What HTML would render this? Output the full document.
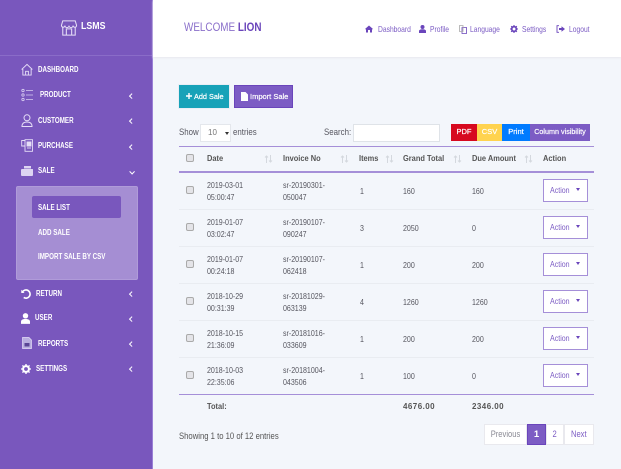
<!DOCTYPE html>
<html><head><meta charset="utf-8"><style>
html,body{margin:0;padding:0}
body{width:621px;height:469px;overflow:hidden;background:#f3f6fb;position:relative;font-family:"Liberation Sans",sans-serif;font-size:8.500px;color:#56565f}
.a{position:absolute;white-space:nowrap}
.t{position:absolute;white-space:nowrap;line-height:12px;transform:translateY(-6px) scaleX(.83);transform-origin:0 50%}
#side{position:absolute;left:0;top:0;width:152px;height:469px;background:#7957bd;border-right:1px solid #9a80d6}
.m{position:absolute;left:38px;color:#fff;font-weight:bold;font-size:7.800px;line-height:12px;transform:translateY(-6px) scaleX(.8);transform-origin:0 50%;white-space:nowrap}
.ch{position:absolute;left:130px;width:2.500px;height:2.500px;border-left:1.4px solid #fff;border-bottom:1.4px solid #fff;transform:rotate(45deg)}
svg{position:absolute;overflow:visible}
.cb{position:absolute;left:186px;width:6px;height:6px;background:#e4e4e8;border:1px solid #aaa;border-radius:2px}
.act{position:absolute;left:543px;width:43px;height:21px;background:#fff;border:1px solid #a58fd8;color:#7c5cc4;font-size:8.500px;line-height:21px;margin-top:-.5px}
.act span{position:absolute;left:6px;transform:scaleX(.83);transform-origin:0 50%}
.act i{position:absolute;left:32px;top:8.500px;border-left:2.500px solid transparent;border-right:2.500px solid transparent;border-top:3px solid #6a45bb}
.sort{position:absolute;top:155px;width:7px;height:8px}
.b{font-weight:bold;color:#555;font-size:8px;transform:translateY(-6px) scaleX(.93)}
.n{font-weight:bold;color:#555;font-size:8px;transform:translateY(-6px);letter-spacing:.45px}
.hl{position:absolute;left:179px;width:415px;background:#a58fd8}
.sep{position:absolute;left:179px;width:415px;height:1px;background:#e9ecf1}
.dt{position:absolute;color:#fff;text-align:center;line-height:16px;height:17px;top:124px;font-size:7.500px;-webkit-text-stroke:.2px #fff;white-space:nowrap}
.nav{position:absolute;color:#7c5cc4;font-size:8.500px;line-height:12px;top:23px;white-space:nowrap;transform:scaleX(.79);transform-origin:0 50%}
.pg{position:absolute;top:424px;height:21px;line-height:21px;text-align:center;background:#fff;font-size:9.500px;color:#7c5cc4;box-shadow:0 0 0 1px #e9e9ee inset}
.pg span{display:inline-block;transform:scaleX(.8)}
</style></head><body>

<div id="side">
<div style="position:absolute;left:0;top:55px;width:152px;height:1px;background:#8a6cc8"></div>
<svg style="left:61px;top:20px" width="16" height="16" viewBox="0 0 18 18" fill="none" stroke="#e6def7" stroke-width="1.2"><path d="M2 1h14l1.500 5a2 2 0 0 1-4 .3 2 2 0 0 1-4.500 0 2 2 0 0 1-4.500 0 2 2 0 0 1-4-.3z"/><path d="M2 8v9h14V8"/><path d="M6 17v-7h6v7"/></svg>
<div class="a" style="left:81px;top:19.500px;color:#fff;font-weight:bold;font-size:10px;line-height:14px;transform:scaleX(.88);transform-origin:0 50%">LSMS</div>

<svg style="left:21px;top:63px" width="12" height="13" viewBox="0 0 13 13" fill="none" stroke="#e6def7"><path d="M.7 6.500 6.500 1l5.800 5.500M2 6v6.500h9V6M5 12.500V8.500h3v4"/></svg>
<div class="m" style="top:69.500px">DASHBOARD</div>

<svg style="left:21px;top:89px" width="12" height="12" viewBox="0 0 12 12" fill="none" stroke="#d8cdf0" stroke-width=".8"><circle cx="2" cy="1.500" r="1.200"/><circle cx="2" cy="6" r="1.200"/><circle cx="2" cy="10.500" r="1.200"/><path d="M5 1.500h7M5 6h7M5 10.500h7"/></svg>
<div class="m" style="top:95px;left:39.500px">PRODUCT</div><div class="ch" style="top:93.500px"></div>

<svg style="left:21px;top:114px" width="12" height="13" viewBox="0 0 12 13" fill="none" stroke="#e6def7"><circle cx="6" cy="3.800" r="3"/><path d="M1 12.500c0-3 2-4.500 5-4.500s5 1.500 5 4.500z"/></svg>
<div class="m" style="top:120.500px">CUSTOMER</div><div class="ch" style="top:119px"></div>

<svg style="left:21px;top:139px" width="12" height="13" viewBox="0 0 12 13" fill="none" stroke="#e6def7" stroke-width=".9"><path d="M4 .7h7.500v11.600H4zM.7 1.500H4v5.500H.7z"/><path d="M6 3h4v4H6z" fill="#e6def7"/><path d="M6 9h4"/></svg>
<div class="m" style="top:146px">PURCHASE</div><div class="ch" style="top:144.500px"></div>

<svg style="left:21px;top:166px" width="12" height="10" viewBox="0 0 12 10" fill="#ddd4f2"><path d="M3 0h7v2.500H3zM1 3h10.500a.5.500 0 0 1 .5.500V9a1 1 0 0 1-1 1H1a1 1 0 0 1-1-1V4a1 1 0 0 1 1-1z"/></svg>
<div class="m" style="top:171px">SALE</div>
<div class="ch" style="top:169.500px;transform:rotate(-45deg)"></div>

<div style="position:absolute;left:16px;top:186px;width:120px;height:92px;background:#a58ed3;border:1px solid #b09bd9;border-radius:2px"></div>
<div style="position:absolute;left:32px;top:196px;width:89px;height:22px;background:#7957bd;border-radius:2px"></div>
<div class="m" style="top:207.500px">SALE LIST</div>
<div class="m" style="top:232.500px">ADD SALE</div>
<div class="m" style="top:257px">IMPORT SALE BY CSV</div>

<svg style="left:21px;top:289px" width="10" height="10" viewBox="0 0 11 11" fill="none" stroke="#fff" stroke-width="1.800"><path d="M1.500 3.500A4.500 4.500 0 1 1 3 9.300"/><path d="M.3 .8v3.600h3.600" fill="#fff" stroke="none"/></svg>
<div class="m" style="top:293.500px;left:36px">RETURN</div><div class="ch" style="top:291.500px"></div>

<svg style="left:21px;top:312.500px" width="9" height="11" viewBox="0 0 10 12" fill="#fff"><circle cx="5" cy="3" r="3"/><path d="M0 12V9.500C0 7.500 2 6.500 5 6.500s5 1 5 3V12z"/></svg>
<div class="m" style="top:318px;left:34.500px">USER</div><div class="ch" style="top:316.500px"></div>

<svg style="left:22px;top:337px" width="10" height="12" viewBox="0 0 10 12"><path d="M.5.500H7L9.500 3v8.500H.5z" fill="#b9aee0" stroke="#e6def7" stroke-width=".7"/><path d="M2.500 6h5v3.500h-5z" fill="#5b4596"/></svg>
<div class="m" style="top:343.500px">REPORTS</div><div class="ch" style="top:342px"></div>

<svg style="left:21px;top:364px" width="10" height="10" viewBox="0 0 11 11"><circle cx="5.500" cy="5.500" r="3.200" fill="none" stroke="#fff" stroke-width="2.200"/><path d="M5.500 0v11M0 5.500h11M1.600 1.600l7.800 7.800M9.400 1.600l-7.800 7.800" stroke="#fff" stroke-width="1.500" stroke-dasharray="2 7 2 0"/></svg>
<div class="m" style="top:368.500px;left:36px">SETTINGS</div><div class="ch" style="top:367px"></div>
</div>

<div style="position:absolute;left:153px;top:0;width:468px;height:57px;background:#fff;box-shadow:0 1px 2px #e8e8ee"></div>
<div class="a" style="left:184px;top:21px;font-size:11.500px;line-height:14px;color:#8a6fca;transform:scaleX(.86);transform-origin:0 50%">WELCOME <b style="color:#6a45bb">LION</b></div>

<svg style="left:365px;top:25px" width="8" height="8" viewBox="0 0 8 8" fill="#6a45bb"><path d="M0 4 4 .5 8 4 7 4.500V7.500H5V5H3V7.500H1V4.500z"/></svg>
<div class="nav" style="left:378px">Dashboard</div>
<svg style="left:419px;top:25px" width="7" height="8" viewBox="0 0 7 8" fill="#6a45bb"><circle cx="3.500" cy="2" r="2"/><path d="M0 8V6C0 5 1.500 4.300 3.500 4.300S7 5 7 6v2z"/></svg>
<div class="nav" style="left:430px">Profile</div>
<svg style="left:459px;top:25px" width="8" height="9" viewBox="0 0 8 9" fill="none" stroke="#6a45bb" stroke-width=".8"><path d="M3 2.500h4.500v6H3z"/><path d="M.5.500h3.500v6H.5z" stroke="#aaa"/></svg>
<div class="nav" style="left:470px">Language</div>
<svg style="left:510px;top:25px" width="8" height="8" viewBox="0 0 11 11"><circle cx="5.500" cy="5.500" r="3.200" fill="none" stroke="#6a45bb" stroke-width="2.400"/><path d="M5.500 0v11M0 5.500h11M1.600 1.600l7.800 7.800M9.400 1.600l-7.800 7.800" stroke="#6a45bb" stroke-width="1.500" stroke-dasharray="2 7 2 0"/></svg>
<div class="nav" style="left:522px">Settings</div>
<svg style="left:556px;top:25px" width="9" height="8" viewBox="0 0 9 8"><path d="M3 .7H1v6.600h2" fill="none" stroke="#6a45bb" stroke-width=".9"/><path d="M3 3h2.500V1.300L9 4 5.500 6.700V5H3z" fill="#6a45bb"/></svg>
<div class="nav" style="left:569px">Logout</div>

<div class="a" style="left:179px;top:85px;width:50px;height:23px;background:#17a2b8;box-shadow:0 0 0 1px #e9eef5"></div>
<svg style="left:186px;top:93px" width="6" height="6" viewBox="0 0 6 6"><path d="M3 0v6M0 3h6" stroke="#fff" stroke-width="1.400"/></svg>
<div class="a" style="left:194px;top:91px;color:#fff;font-size:7.300px;line-height:12px;-webkit-text-stroke:.2px #fff">Add Sale</div>
<div class="a" style="left:234px;top:85px;width:59px;height:23px;background:#7c5cc4;border:1px solid #6a45bb;box-sizing:border-box"></div>
<svg style="left:241px;top:92px" width="7" height="9" viewBox="0 0 7 9" fill="#fff"><path d="M0 0h4.500L7 2.500V9H0z"/></svg>
<div class="a" style="left:250px;top:91px;color:#fff;font-size:7.500px;line-height:12px;-webkit-text-stroke:.2px #fff">Import Sale</div>

<div class="t" style="left:179px;top:133px;font-size:9.500px">Show</div>
<div class="a" style="left:200px;top:124px;width:31px;height:18px;background:#fff;border:1px solid #e4e7ec;box-sizing:border-box;color:#777;font-size:8px;line-height:16px;padding-left:7px">10<span style="position:absolute;left:24px;top:7px;border-left:2px solid transparent;border-right:2px solid transparent;border-top:3px solid #333"></span></div>
<div class="t" style="left:233px;top:133px;font-size:9.500px">entries</div>
<div class="t" style="left:324px;top:133px;font-size:9.500px">Search:</div>
<div class="a" style="left:353px;top:124px;width:87px;height:18px;background:#fff;border:1px solid #dfe3e8;box-sizing:border-box"></div>

<div class="dt" style="left:451px;width:26px;background:#d7091f">PDF</div>
<div class="dt" style="left:477px;width:25px;background:#ffd34f">CSV</div>
<div class="dt" style="left:502px;width:28px;background:#007bff">Print</div>
<div class="dt" style="left:530px;width:60px;background:#7c5cc4;font-size:7.200px">Column visibility</div>

<div class="hl" style="top:146px;height:1px"></div>
<div class="hl" style="top:171px;height:2px"></div>
<div class="hl" style="top:394px;height:1px"></div>
<div class="sep" style="top:208.500px"></div>
<div class="sep" style="top:245.500px"></div>
<div class="sep" style="top:282.500px"></div>
<div class="sep" style="top:319.500px"></div>
<div class="sep" style="top:356.500px"></div>

<div class="cb" style="top:154px"></div>
<div class="t b" style="left:207px;top:159px">Date</div><svg class="sort" style="left:265px" viewBox="0 0 7 8" fill="none" stroke="#d4d8de"><path d="M1.500 8V1M0 2.500 1.500 1 3 2.500M5.500 0v7M4 5.500 5.500 7 7 5.500"/></svg>
<div class="t b" style="left:283px;top:159px">Invoice No</div><svg class="sort" style="left:341px" viewBox="0 0 7 8" fill="none" stroke="#d4d8de"><path d="M1.500 8V1M0 2.500 1.500 1 3 2.500M5.500 0v7M4 5.500 5.500 7 7 5.500"/></svg>
<div class="t b" style="left:359px;top:159px">Items</div><svg class="sort" style="left:386px" viewBox="0 0 7 8" fill="none" stroke="#d4d8de"><path d="M1.500 8V1M0 2.500 1.500 1 3 2.500M5.500 0v7M4 5.500 5.500 7 7 5.500"/></svg>
<div class="t b" style="left:403px;top:159px">Grand Total</div><svg class="sort" style="left:454px" viewBox="0 0 7 8" fill="none" stroke="#d4d8de"><path d="M1.500 8V1M0 2.500 1.500 1 3 2.500M5.500 0v7M4 5.500 5.500 7 7 5.500"/></svg>
<div class="t b" style="left:472px;top:159px">Due Amount</div><svg class="sort" style="left:525px" viewBox="0 0 7 8" fill="none" stroke="#d4d8de"><path d="M1.500 8V1M0 2.500 1.500 1 3 2.500M5.500 0v7M4 5.500 5.500 7 7 5.500"/></svg>
<div class="t b" style="left:543px;top:159px">Action</div>

<!-- row 1 -->
<div class="cb" style="top:186px"></div>
<div class="t" style="left:207px;top:185px">2019-03-01</div><div class="t" style="left:207px;top:197px">05:00:47</div>
<div class="t" style="left:283px;top:185px">sr-20190301-</div><div class="t" style="left:283px;top:197px">050047</div>
<div class="t" style="left:360px;top:190.500px">1</div><div class="t" style="left:403px;top:190.500px">160</div><div class="t" style="left:472px;top:190.500px">160</div>
<div class="act" style="top:179px"><span>Action</span><i></i></div>
<!-- row 2 -->
<div class="cb" style="top:223px"></div>
<div class="t" style="left:207px;top:222px">2019-01-07</div><div class="t" style="left:207px;top:234px">03:02:47</div>
<div class="t" style="left:283px;top:222px">sr-20190107-</div><div class="t" style="left:283px;top:234px">090247</div>
<div class="t" style="left:360px;top:227.500px">3</div><div class="t" style="left:403px;top:227.500px">2050</div><div class="t" style="left:472px;top:227.500px">0</div>
<div class="act" style="top:216px"><span>Action</span><i></i></div>
<!-- row 3 -->
<div class="cb" style="top:260px"></div>
<div class="t" style="left:207px;top:259px">2019-01-07</div><div class="t" style="left:207px;top:271px">00:24:18</div>
<div class="t" style="left:283px;top:259px">sr-20190107-</div><div class="t" style="left:283px;top:271px">062418</div>
<div class="t" style="left:360px;top:264.500px">1</div><div class="t" style="left:403px;top:264.500px">200</div><div class="t" style="left:472px;top:264.500px">200</div>
<div class="act" style="top:253px"><span>Action</span><i></i></div>
<!-- row 4 -->
<div class="cb" style="top:297px"></div>
<div class="t" style="left:207px;top:296px">2018-10-29</div><div class="t" style="left:207px;top:308px">00:31:39</div>
<div class="t" style="left:283px;top:296px">sr-20181029-</div><div class="t" style="left:283px;top:308px">063139</div>
<div class="t" style="left:360px;top:301.500px">4</div><div class="t" style="left:403px;top:301.500px">1260</div><div class="t" style="left:472px;top:301.500px">1260</div>
<div class="act" style="top:290px"><span>Action</span><i></i></div>
<!-- row 5 -->
<div class="cb" style="top:334px"></div>
<div class="t" style="left:207px;top:333px">2018-10-15</div><div class="t" style="left:207px;top:345px">21:36:09</div>
<div class="t" style="left:283px;top:333px">sr-20181016-</div><div class="t" style="left:283px;top:345px">033609</div>
<div class="t" style="left:360px;top:338.500px">1</div><div class="t" style="left:403px;top:338.500px">200</div><div class="t" style="left:472px;top:338.500px">200</div>
<div class="act" style="top:327px"><span>Action</span><i></i></div>
<!-- row 6 -->
<div class="cb" style="top:371px"></div>
<div class="t" style="left:207px;top:370px">2018-10-03</div><div class="t" style="left:207px;top:382px">22:35:06</div>
<div class="t" style="left:283px;top:370px">sr-20181004-</div><div class="t" style="left:283px;top:382px">043506</div>
<div class="t" style="left:360px;top:375.500px">1</div><div class="t" style="left:403px;top:375.500px">100</div><div class="t" style="left:472px;top:375.500px">0</div>
<div class="act" style="top:364px"><span>Action</span><i></i></div>

<div class="t b" style="left:207px;top:407px">Total:</div>
<div class="t n" style="left:403px;top:407px">4676.00</div>
<div class="t n" style="left:472px;top:407px">2346.00</div>

<div class="t" style="left:179px;top:437px;font-size:9.500px;color:#555;transform:translateY(-6px) scaleX(.81)">Showing 1 to 10 of 12 entries</div>

<div class="pg" style="left:484px;width:43px;color:#8a8a94"><span>Previous</span></div>
<div class="pg" style="left:527px;width:19px;background:#7c5cc4;color:#fff;font-weight:bold;box-shadow:0 0 0 1px #6a45bb inset">1</div>
<div class="pg" style="left:546px;width:18px"><span>2</span></div>
<div class="pg" style="left:564px;width:30px"><span>Next</span></div>
</body></html>
